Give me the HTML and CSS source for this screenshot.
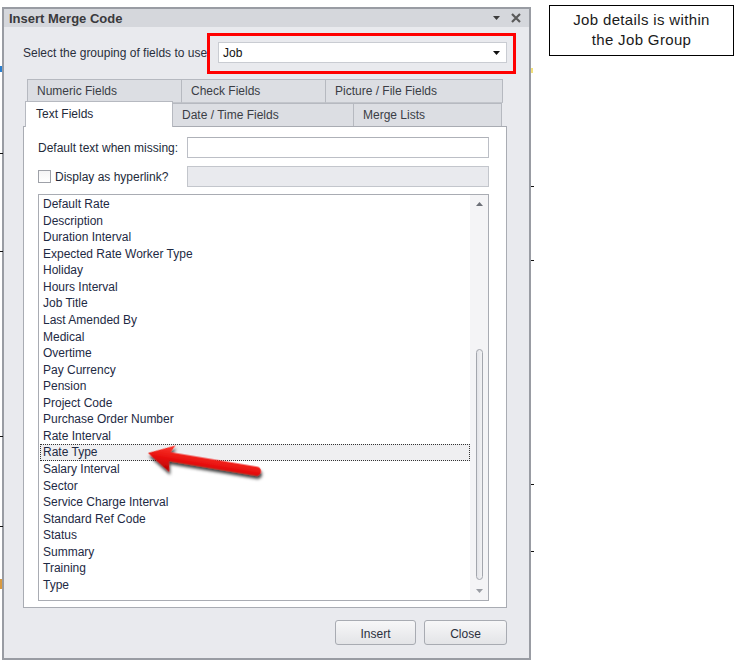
FILE: index.html
```html
<!DOCTYPE html>
<html>
<head>
<meta charset="utf-8">
<link rel="stylesheet" href="styles.css">
</head>
<body>
<div class="page">
  <div class="dialog">
    <div class="titlebar">
      <span class="title">Insert Merge Code</span>
      <span class="tb-icons">
        <svg class="tb-menu" width="8" height="5" viewBox="0 0 8 5"><path d="M0 0H7L3.5 4Z" fill="#3c3c3c"/></svg>
        <svg class="tb-close" width="10" height="10" viewBox="0 0 10 10"><path d="M1 1L9 9M9 1L1 9" stroke="#5a5a5a" stroke-width="2.2"/></svg>
      </span>
    </div>
    <div class="content">
      <div class="group-row">
        <span class="group-label">Select the grouping of fields to use:</span>
        <div class="combo">
          <span class="combo-value">Job</span>
          <svg class="combo-arrow" width="7" height="4" viewBox="0 0 7 4"><path d="M0 0H7L3.5 4Z" fill="#111"/></svg>
        </div>
      </div>
      <div class="tabs">
        <div class="tabrow back">
          <div class="tab w-numeric">Numeric Fields</div>
          <div class="tab w-check">Check Fields</div>
          <div class="tab w-picture">Picture / File Fields</div>
        </div>
        <div class="tabrow front">
          <div class="tab w-text selected">Text Fields</div>
          <div class="tab w-date">Date / Time Fields</div>
          <div class="tab w-merge">Merge Lists</div>
        </div>
      </div>
      <div class="panel">
        <div class="field-row">
          <span class="field-label">Default text when missing:</span>
          <div class="input"></div>
        </div>
        <div class="field-row">
          <span class="field-label"><span class="checkbox"></span>Display as hyperlink?</span>
          <div class="input disabled"></div>
        </div>
        <div class="listbox">
          <ul class="items">
            <li>Default Rate</li>
            <li>Description</li>
            <li>Duration Interval</li>
            <li>Expected Rate Worker Type</li>
            <li>Holiday</li>
            <li>Hours Interval</li>
            <li>Job Title</li>
            <li>Last Amended By</li>
            <li>Medical</li>
            <li>Overtime</li>
            <li>Pay Currency</li>
            <li>Pension</li>
            <li>Project Code</li>
            <li>Purchase Order Number</li>
            <li>Rate Interval</li>
            <li class="current">Rate Type</li>
            <li>Salary Interval</li>
            <li>Sector</li>
            <li>Service Charge Interval</li>
            <li>Standard Ref Code</li>
            <li>Status</li>
            <li>Summary</li>
            <li>Training</li>
            <li>Type</li>
          </ul>
          <div class="scrollbar">
            <div class="sb-btn"><svg width="7" height="4" viewBox="0 0 7 4"><path d="M3.5 0L7 4H0Z" fill="#6d7078"/></svg></div>
            <div class="sb-track"><div class="sb-thumb"></div></div>
            <div class="sb-btn"><svg width="7" height="4" viewBox="0 0 7 4"><path d="M0 0H7L3.5 4Z" fill="#9a9da4"/></svg></div>
          </div>
        </div>
      </div>
      <div class="buttons">
        <div class="btn b-insert">Insert</div>
        <div class="btn b-close">Close</div>
      </div>
    </div>
  </div>
  <div class="callout">Job details is within<br>the Job Group</div>
</div>

<div class="mark red-rect"></div>
<span class="tick t1"></span><span class="tick t2"></span><span class="tick t3"></span><span class="tick t4"></span>
<span class="tick r1"></span><span class="tick r2"></span><span class="tick r3"></span><span class="tick r4"></span>
<span class="blip blue"></span><span class="blip orange"></span><span class="blip yellow"></span>

<svg class="arrow-layer" width="737" height="662" viewBox="0 0 737 662">
  <defs>
    <linearGradient id="redg" x1="0" y1="0" x2="0" y2="1">
      <stop offset="0" stop-color="#ff3a30"/>
      <stop offset="0.5" stop-color="#e8110f"/>
      <stop offset="1" stop-color="#b60000"/>
    </linearGradient>
    <filter id="sh" x="-20%" y="-50%" width="140%" height="200%">
      <feDropShadow dx="1.5" dy="3" stdDeviation="1.6" flood-color="#000" flood-opacity="0.75"/>
    </filter>
  </defs>
  <g transform="translate(148 453) rotate(9.5)" filter="url(#sh)">
    <path d="M0 0 L26 -12 L22 -4.5 L110 -4.5 A4.5 4.5 0 0 1 110 4.5 L22 4.5 L24 15 Z" fill="url(#redg)"/>
  </g>
</svg>
</body>
</html>
```
FILE: styles.css
```css
* { box-sizing: border-box; }
html, body { margin: 0; padding: 0; background: #fff; }
body {
  width: 737px;
  height: 662px;
  overflow: hidden;
  position: relative;
  font-family: "Liberation Sans", Arial, sans-serif;
  font-size: 12px;
  color: #232a3a;
}
.page {
  display: flex;
  align-items: flex-start;
}
.dialog {
  margin: 7px 0 0 2px;
  width: 529px;
  height: 653px;
  border: 2px solid #999ca3;
  background: #e9eaee;
  display: flex;
  flex-direction: column;
}
.titlebar {
  height: 18px;
  background: #d5d7dc;
  display: flex;
  align-items: center;
  justify-content: space-between;
  padding: 0 8px 0 5px;
}
.title {
  font-weight: bold;
  font-size: 13px;
  color: #3a3a3c;
}
.tb-icons { display: flex; align-items: center; gap: 10px; }
.tb-menu { margin-top: 1px; }
.content {
  padding: 0 22px 0 19px;
  display: flex;
  flex-direction: column;
}
.group-row {
  margin-top: 15px;
  height: 21px;
  display: flex;
  align-items: center;
}
.group-label { width: 195px; color: #2a2f3c; }
.combo {
  flex: 1;
  height: 21px;
  background: #fff;
  border: 1px solid #c9ccd2;
  display: flex;
  align-items: center;
  justify-content: space-between;
  padding: 0 6px 0 4px;
}
.combo-value { color: #111; }
.tabs { margin-top: 16px; display: flex; flex-direction: column; }
.tabrow { display: flex; }
.tabrow.back { height: 24px; margin-left: 4px; }
.tabrow.front { height: 23px; margin-left: 2px; }
.tab {
  background: #dcdee3;
  border: 1px solid #b6b9c0;
  border-bottom: none;
  margin-left: -1px;
  padding-left: 9px;
  display: flex;
  align-items: center;
  color: #3a3d45;
  white-space: nowrap;
}
.tab:first-child { margin-left: 0; }
.tabrow.back .tab { border-bottom: 1px solid #c2c5cb; }
.w-numeric { width: 155px; }
.w-check { width: 145px; }
.w-picture { width: 178px; }
.w-text { width: 148px; }
.w-date { width: 182px; }
.w-merge { width: 149px; }
.tab.selected {
  background: #fff;
  margin-top: -2px;
  height: 26px;
  margin-bottom: -1px;
  position: relative;
  z-index: 2;
  padding-left: 10px;
  padding-bottom: 2px;
  color: #232a3a;
}
.panel {
  height: 482px;
  background: #fff;
  border: 1px solid #a9acb3;
  padding: 10px 17px 6px 14px;
  display: flex;
  flex-direction: column;
}
.field-row {
  height: 21px;
  display: flex;
  align-items: center;
  margin-bottom: 8px;
}
.field-row + .field-row { margin-bottom: 7px; }
.field-label {
  width: 149px;
  display: flex;
  align-items: center;
}
.checkbox {
  width: 13px;
  height: 13px;
  border: 1px solid #9ea1a8;
  background: linear-gradient(#f4f4f5, #fff);
  margin-right: 4px;
}
.input {
  flex: 1;
  height: 21px;
  border: 1px solid #bcbfc6;
  border-top-color: #aeb1b8;
  background: #fff;
}
.input.disabled { background: #e9eaee; border-color: #c3c6cc; }
.listbox {
  height: 407px;
  border: 1px solid #a9acb3;
  display: flex;
}
.items {
  list-style: none;
  margin: 0;
  padding: 1px 0 0 0;
  flex: 1;
}
.items li {
  height: 16.57px;
  line-height: 16.57px;
  padding-left: 4px;
  white-space: nowrap;
  color: #1e2a44;
}
.items li.current {
  margin-left: 1px;
  padding-left: 2px;
  border: 1px dotted #333;
  background: #efeff1;
  line-height: 14.57px;
}
.scrollbar {
  width: 18px;
  background: #f4f4f6;
  display: flex;
  flex-direction: column;
}
.sb-btn {
  height: 18px;
  display: flex;
  align-items: center;
  justify-content: center;
}
.sb-track { flex: 1; padding-top: 136px; display: flex; justify-content: center; }
.sb-thumb {
  width: 7px;
  height: 231px;
  border: 1px solid #a3a6ad;
  border-radius: 4px;
  background: linear-gradient(90deg, #e3e4e8, #f2f2f4);
}
.buttons {
  margin-top: 12px;
  height: 25px;
  display: flex;
  justify-content: flex-end;
  gap: 8px;
}
.btn {
  height: 25px;
  border: 1px solid #a8abb2;
  border-radius: 3px;
  background: linear-gradient(#f7f7f8, #e3e4e7);
  display: flex;
  align-items: center;
  justify-content: center;
  padding-top: 2px;
  color: #2a2f3c;
}
.b-insert { width: 81px; }
.b-close { width: 83px; }
.callout {
  margin: 5px 0 0 18px;
  width: 185px;
  height: 51px;
  border: 1px solid #000;
  font-family: "Liberation Sans", Arial, sans-serif;
  font-size: 15px;
  letter-spacing: 0.35px;
  line-height: 20px;
  text-align: center;
  color: #1a1a1a;
  padding-top: 4px;
}
.mark.red-rect {
  position: absolute;
  left: 207px;
  top: 33px;
  width: 309px;
  height: 41px;
  border: 3px solid #f00;
}
.tick {
  position: absolute;
  width: 3px;
  height: 1px;
  background: #111;
}
.t1 { left: 0; top: 153px; }
.t2 { left: 0; top: 251px; }
.t3 { left: 0; top: 436px; }
.t4 { left: 0; top: 526px; }
.r1 { left: 531px; top: 186px; }
.r2 { left: 531px; top: 260px; }
.r3 { left: 531px; top: 484px; }
.r4 { left: 531px; top: 551px; }
.blip { position: absolute; width: 2px; }
.blue { left: 0; top: 66px; height: 6px; background: #2a7fd0; }
.orange { left: 0; top: 579px; height: 10px; background: #d99a40; }
.yellow { left: 531px; top: 68px; height: 5px; background: #f2e07a; }
.arrow-layer {
  position: absolute;
  left: 0;
  top: 0;
  pointer-events: none;
}
```
